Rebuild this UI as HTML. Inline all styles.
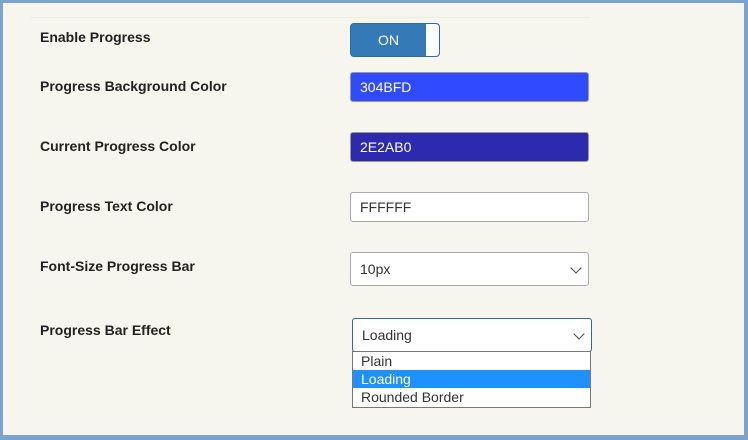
<!DOCTYPE html>
<html><head><style>
html,body{margin:0;padding:0;}
body{width:748px;height:440px;background:#7ba3cd;position:relative;overflow:hidden;font-family:"Liberation Sans",Arial,sans-serif;}
.panel{position:absolute;left:3px;top:3px;width:741px;height:432px;background:#f6f5ee;}
.lbl{position:absolute;left:40px;font-size:14px;font-weight:bold;color:#222;}
.inp{position:absolute;left:350px;width:239px;height:28px;border:1px solid #aaa;border-radius:3px;box-sizing:border-box;font-size:14px;line-height:26px;padding-left:9px;background:#fff;color:#333;}
.chev{position:absolute;right:8px;top:9px;width:7px;height:7px;border-right:1.7px solid #444;border-bottom:1.7px solid #444;transform:rotate(45deg);}
</style></head><body>
<div class="panel"></div>
<div style="position:absolute;left:30px;top:17px;width:560px;height:1px;background:#eeede6"></div>
<div class="lbl" style="top:29px">Enable Progress</div>
<div style="position:absolute;left:350px;top:23px;width:90px;height:34px;box-sizing:border-box;border:1px solid #2e6da4;border-radius:4px;background:#337ab7;overflow:hidden">
<div style="position:absolute;left:0;top:0;width:75px;height:32px;color:#fff;font-size:14px;line-height:32px;text-align:center">ON</div>
<div style="position:absolute;left:75px;top:0;width:13px;height:32px;background:#fff;border-radius:0 3px 3px 0"></div></div>
<div class="lbl" style="top:78px">Progress Background Color</div>
<div class="inp" style="top:72px;height:30px;line-height:28px;background:#304bfd;color:#fff;border-color:#999">304BFD</div>
<div class="lbl" style="top:138px">Current Progress Color</div>
<div class="inp" style="top:132px;height:30px;line-height:28px;background:#2e2ab0;color:#fff;border-color:#999">2E2AB0</div>
<div class="lbl" style="top:198px">Progress Text Color</div>
<div class="inp" style="top:192px;height:30px;line-height:28px;">FFFFFF</div>
<div class="lbl" style="top:258px">Font-Size Progress Bar</div>
<div class="inp" style="top:252px;height:34px;line-height:32px;">10px<div class="chev" style="top:11px"></div></div>
<div class="lbl" style="top:322px">Progress Bar Effect</div>
<div class="inp" style="top:318px;left:352px;width:240px;height:34px;line-height:32px;border:1.5px solid #2c6aa6;">Loading<div class="chev" style="top:11px"></div></div>
<div style="position:absolute;left:352px;top:351px;width:239px;height:57px;border:1px solid #777;box-sizing:border-box;background:#fff;font-size:14px;color:#333;">
<div style="height:18px;line-height:18px;padding-left:8px">Plain</div>
<div style="height:18px;line-height:18px;padding-left:8px;background:#1e90ff;color:#fff">Loading</div>
<div style="height:18px;line-height:18px;padding-left:8px">Rounded Border</div>
</div>
</body></html>
